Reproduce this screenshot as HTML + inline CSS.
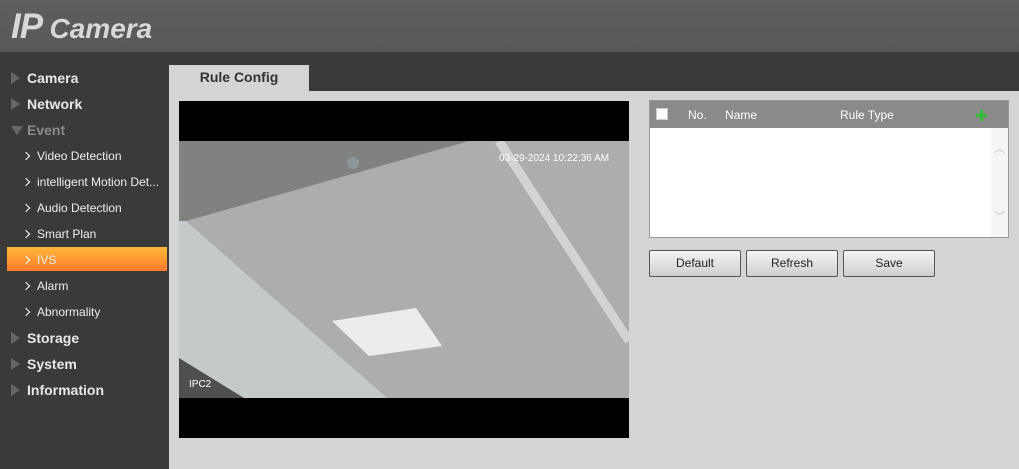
<!DOCTYPE html>
<html><head><style>
*{margin:0;padding:0;box-sizing:border-box}
body{width:1019px;height:469px;overflow:hidden;background:#d4d4d4;font-family:"Liberation Sans",Arial,sans-serif;position:relative}
#hd{position:absolute;left:0;top:0;width:1019px;height:52px;background:linear-gradient(#5e5e5e,#585858)}
#logo{position:absolute;left:11px;top:7px;font-size:35px;font-weight:bold;font-style:italic;color:#d8d8d8;letter-spacing:-1px}
#logo span{font-size:28px;letter-spacing:0}
#band{position:absolute;left:0;top:52px;width:1019px;height:39px;background:#3a3a3a}
#side{position:absolute;left:0;top:52px;width:169px;height:417px;background:#3a3a3a}
.m{position:absolute;left:27px;font-size:14px;font-weight:bold;color:#e8e8e8}
.m.g{color:#8a8a8a}
.tri{position:absolute;left:11px;width:0;height:0;border-top:6px solid transparent;border-bottom:6px solid transparent;border-left:9px solid #666}
.tri.d{border-left:6px solid transparent;border-right:6px solid transparent;border-top:9px solid #666;border-bottom:0}
.s{position:absolute;left:23px;font-size:12px;color:#eee}
.s:before{content:"";display:inline-block;width:5px;height:5px;border-right:1.5px solid #fff;border-top:1.5px solid #fff;transform:rotate(45deg);margin:0 8px 1px 0}
#ivs{position:absolute;left:7px;top:247px;width:160px;height:24px;background:linear-gradient(#ffb83a,#ff7a2a)}
#tab{position:absolute;left:169px;top:65px;width:140px;height:27px;background:#d4d4d4;text-align:center;font-size:14px;font-weight:bold;color:#333;line-height:24px}
#vid{position:absolute;left:179px;top:101px;width:450px;height:337px;background:#000}
#tbl{position:absolute;left:649px;top:100px;width:360px;height:138px;background:#fff;border:1px solid #999}
#th{height:27px;background:#8a8a8a;position:relative;color:#fff;font-size:12px}
#th span{position:absolute;top:7px}
.btn{position:absolute;top:250px;width:92px;height:27px;border:1px solid #555;border-radius:2px;background:linear-gradient(#f4f4f4,#cfcfcf);font-size:12px;color:#222;text-align:center;line-height:25px}
</style></head><body>
<div id="hd"><div id="logo">IP <span>Camera</span></div></div>
<div id="band"></div>
<div id="side"></div>
<div class="tri" style="top:72px"></div><div class="m" style="top:70px">Camera</div>
<div class="tri" style="top:98px"></div><div class="m" style="top:96px">Network</div>
<div class="tri d" style="top:126px"></div><div class="m g" style="top:122px">Event</div>
<div class="s" style="top:149px">Video Detection</div>
<div class="s" style="top:175px">intelligent Motion Det...</div>
<div class="s" style="top:201px">Audio Detection</div>
<div class="s" style="top:227px">Smart Plan</div>
<div id="ivs"></div>
<div class="s" style="top:253px">IVS</div>
<div class="s" style="top:279px">Alarm</div>
<div class="s" style="top:305px">Abnormality</div>
<div class="tri" style="top:332px"></div><div class="m" style="top:330px">Storage</div>
<div class="tri" style="top:358px"></div><div class="m" style="top:356px">System</div>
<div class="tri" style="top:384px"></div><div class="m" style="top:382px">Information</div>
<div id="tab">Rule Config</div>
<div id="vid">
<svg width="450" height="257" style="position:absolute;left:0;top:40px">
<rect width="450" height="257" fill="#abaeac"/>
<polygon points="0,0 290,0 7,80 0,80" fill="#80827f"/>
<polygon points="0,80 7,80 208,257 0,257" fill="#c6c9ca"/>
<polygon points="0,217 65,257 0,257" fill="#4e4f50"/>
<polygon points="153,180 237,167 263,205 190,215" fill="#ececec"/>
<line x1="320" y1="0" x2="450" y2="200" stroke="#d2d4d3" stroke-width="9"/>
<circle cx="174" cy="22" r="6" fill="#8d9597"/>
<text x="320" y="20" font-size="10" fill="#fff" font-family="Liberation Sans">03-29-2024 10:22:36 AM</text>
<text x="10" y="246" font-size="10" fill="#fff" font-family="Liberation Sans">IPC2</text>
</svg>
</div>
<div id="tbl"><div id="th">
<div style="position:absolute;left:6px;top:7px;width:12px;height:12px;background:#fff;border:1px solid #ccc"></div>
<span style="left:38px">No.</span><span style="left:75px">Name</span><span style="left:190px">Rule Type</span>
<svg style="position:absolute;left:326px;top:9px" width="11" height="11"><rect x="4" y="0" width="3" height="11" fill="#3b3"/><rect x="0" y="4" width="11" height="3" fill="#3b3"/></svg>
</div>
<div style="position:absolute;right:0;top:27px;width:17px;height:109px;background:#f5f5f5;color:#bbb;font-size:11px;text-align:center"><div style="margin-top:12px">︿</div><div style="margin-top:52px">﹀</div></div>
</div>
<div class="btn" style="left:649px">Default</div>
<div class="btn" style="left:746px">Refresh</div>
<div class="btn" style="left:843px">Save</div>
</body></html>
